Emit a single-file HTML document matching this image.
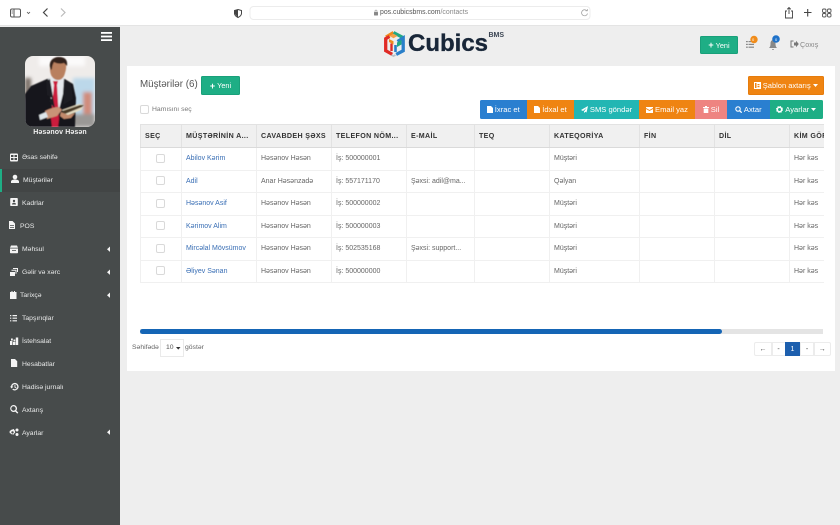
<!DOCTYPE html>
<html lang="az"><head><meta charset="utf-8"><title>Cubics BMS</title>
<style>
*{box-sizing:border-box}
html,body{margin:0;padding:0;width:840px;height:525px;overflow:hidden;background:#eee}
body{font-family:"Liberation Sans",Arial,sans-serif;font-size:7.2px;color:#555;position:relative}
.a{position:absolute}
#root{position:absolute;inset:0;filter:blur(.35px)}
.t{position:absolute;white-space:nowrap;line-height:10px}
.side{color:#e9eaea;font-size:6.8px;margin-top:1px}
.btn{position:absolute;color:#fff;display:flex;align-items:center;justify-content:center;gap:2px;font-size:7.6px;white-space:nowrap}
.btn svg{flex:none}
table{position:absolute;left:140px;top:124px;width:683px;border-collapse:collapse;table-layout:fixed}
th{height:23px;background:#f0f0f0;border:1px solid #e2e2e2;border-bottom:1.5px solid #dadada;text-align:left;padding:0 0 0 4px;font-size:7.1px;color:#333;font-weight:bold;letter-spacing:.35px;white-space:nowrap;overflow:hidden}
td{height:22.5px;border:1px solid #f0f0f0;padding:0 0 0 4px;font-size:7px;color:#666;white-space:nowrap;overflow:hidden}
td:last-child,th:last-child{border-right:0}
td a{color:#3a6fb5;text-decoration:none}
.cb{display:block;width:9px;height:9px;border:1px solid #d9d9d9;border-radius:2px;background:#fff;margin:-1px 0 0 11px}
.pg{position:absolute;top:342px;height:14px;border:1px solid #ececec;background:#fff;display:flex;align-items:center;justify-content:center;font-size:7px;color:#444}
</style></head><body><div id="root">

<!-- browser bar -->
<div class="a" style="left:0;top:0;width:840px;height:26px;background:#fff;border-bottom:1px solid #e4e4e4"></div>
<svg class="a" style="left:0;top:0" width="840" height="26" fill="none" stroke="#555" stroke-width="1">
<rect x="10.5" y="9" width="10" height="8" rx="1.5"/><path d="M14 9v8"/><path d="M11.5 11h1.5M11.5 13h1.5" stroke-width=".7"/>
<path d="M27 12l1.5 1.5L30 12" stroke-width=".8"/>
<path d="M47.5 8.5L43.5 12.5l4 4" stroke-width="1.2" stroke="#444"/>
<path d="M61 8.5l4 4-4 4" stroke="#bbb" stroke-width="1.2"/>
<path d="M238 9.5l3.5 1v3c0 2-1.600 3-3.500 4-1.900-1-3.500-2-3.500-4v-3z" stroke="#444"/><path d="M238 9.500v8l-3.500-4v-3z" fill="#444" stroke="none"/>
<rect x="250" y="6.500" width="340" height="13" rx="3.500" fill="#fff" stroke="#ececec"/>
<rect x="374" y="12" width="4" height="3.500" rx=".5" fill="#888" stroke="none"/><path d="M375 12v-1a1 1 0 0 1 2 0v1" stroke="#888" stroke-width=".6"/>
<path d="M587 11a3 3 0 1 0 .5 2.500" stroke="#999" stroke-width=".7"/><path d="M585.500 10.800h2v-1.800" stroke="#999" stroke-width=".6"/>
<path d="M787 11h-1.500v7h7v-7H791M789 14V7.500M787.200 9.300L789 7.500l1.800 1.800" stroke="#444" stroke-width=".9"/>
<path d="M804 12.500h7.500M807.700 9v7.500" stroke="#444" stroke-width="1.100"/>
<g stroke="#555" stroke-width=".9"><rect x="822.500" y="9" width="3.500" height="3.500" rx="1.200"/><rect x="827.500" y="9" width="3.500" height="3.500" rx="1.200"/><rect x="822.500" y="13.500" width="3.500" height="3.500" rx="1.200"/><rect x="827.500" y="13.500" width="3.500" height="3.500" rx="1.200"/></g>
</svg>
<div class="t" style="left:380px;top:8px;font-size:6.900px;color:#555">pos.cubicsbms.com<span style="color:#888">/contacts</span></div>

<!-- logo -->
<svg class="a" style="left:382px;top:28px" width="26" height="32" viewBox="382 28 26 32" fill="none" stroke-width="3.300">
<path d="M386 37l7.500-4.400" stroke="#f08a1d"/>
<path d="M393.500 32.600l9.500 5" stroke="#23a884"/>
<path d="M389.500 36.500l-3.800 2.200v12l6.500 3.600" stroke="#e02b26"/>
<path d="M391.500 43.500v7.500" stroke="#e02b26" stroke-width="2.400"/>
<path d="M397.500 41.500l5.700-3.500v12.700l-7 3.700" stroke="#2a7fc9"/>
<path d="M395.500 45v7" stroke="#2a7fc9" stroke-width="2.600"/>
<path d="M389 39l4.500 2.200v3.300l-4.500-2.500z" fill="#f08a1d" stroke="none"/>
<path d="M397 42.500l4.500-2.800v4.800l-4.500 2.500z" fill="#23a884" stroke="none"/>
<path d="M389.500 36l4-2.300 4 2.300-4 2.300z" fill="#f5a14a" stroke="none"/>
<path d="M391.500 55l2 1 2-1" stroke="#b8c0c8" stroke-width="1.800"/>
</svg>
<div class="t" style="left:408px;top:29px;font-size:24px;line-height:30px;font-weight:bold;color:#182638;-webkit-text-stroke:.35px #182638">Cubics</div>
<div class="t" style="left:488.500px;top:30.500px;font-size:7px;line-height:10px;font-weight:bold;color:#3a4452">BMS</div>

<!-- top right controls -->
<div class="btn" style="left:700px;top:36px;width:38px;height:18px;background:#1eae85;border:1px solid #19a07a;border-radius:1.500px;font-size:7.300px"><b style="font-size:9px;line-height:8px">+</b>Yeni</div>
<svg class="a" style="left:744px;top:34px" width="40" height="20" fill="#888">
<rect x="2" y="7" width="1.800" height="1.200"/><rect x="4.500" y="7" width="5.500" height="1.200"/><rect x="2" y="9.800" width="1.800" height="1.200"/><rect x="4.500" y="9.800" width="5.500" height="1.200"/><rect x="2" y="12.600" width="1.800" height="1.200"/><rect x="4.500" y="12.600" width="5.500" height="1.200"/>
<circle cx="10" cy="5.500" r="3.700" fill="#f08c1a"/>
<path d="M25 14h8c-1-1-1.500-2-1.500-4.500 0-2-1-3.500-2.500-3.500s-2.500 1.500-2.500 3.500c0 2.500-.5 3.500-1.500 4.500zM28 15h2a1 1 0 0 1-2 0z"/>
<circle cx="32" cy="5" r="3.800" fill="#1f72c9"/>
</svg>
<div class="t" style="left:752px;top:35px;font-size:4px;color:#fff">0</div>
<div class="t" style="left:775px;top:34.500px;font-size:4px;color:#fff">0</div>
<svg class="a" style="left:790px;top:40px" width="9" height="8"><path d="M3.500 1H1v6h2.500" fill="none" stroke="#777" stroke-width="1"/><path d="M4 2.500h2V.8L8.800 4 6 7.200V5.500H4z" fill="#777"/></svg>
<div class="t" style="left:800px;top:40px;font-size:7.200px;color:#888">Çoxış</div>

<!-- sidebar -->
<div class="a" style="left:0;top:27px;width:120px;height:498px;background:#474b4b"></div>
<div class="a" style="left:2px;top:169px;width:118px;height:23px;background:#424545"></div>
<div class="a" style="left:0;top:169px;width:2px;height:23px;background:#1eae85"></div>
<svg class="a" style="left:101px;top:31px" width="12" height="12" fill="#fff"><rect y="1" width="11" height="1.800"/><rect y="4.600" width="11" height="1.800"/><rect y="8.200" width="11" height="1.800"/></svg>

<!-- avatar -->
<svg class="a" style="left:25px;top:56px" width="70" height="71" viewBox="0 0 70 71">
<defs><clipPath id="av"><rect width="70" height="71" rx="8"/></clipPath><filter id="bl"><feGaussianBlur stdDeviation="1.800"/></filter><filter id="bs"><feGaussianBlur stdDeviation=".5"/></filter></defs>
<g clip-path="url(#av)">
<rect width="70" height="71" fill="#efecea"/>
<g filter="url(#bl)">
<rect x="48" y="22" width="22" height="36" fill="#bcd8ea"/>
<rect x="58" y="36" width="9" height="24" fill="#d08c7c"/>
<rect x="0" y="22" width="6" height="20" fill="#7a6f68"/>
<rect x="46" y="58" width="24" height="13" fill="#9a9896"/>
<rect x="14" y="0" width="46" height="10" fill="#fbfafa"/>
</g>
<g filter="url(#bs)">
<path d="M0 71V38L6 30l16-7 8-2 8 1 10 6 3 14-1 29z" fill="#15161b"/>
<path d="M23 23l7-3 9 2-1 16-6 24-5-12z" fill="#e6eaee"/>
<path d="M28 25h5l-1 4 2 34-1 8h-6l-1-8 3-34z" fill="#cb1a3c"/>
<path d="M21 25l4-2 5 30-6-8 3-3-5-3zM39 23l7 4 2 16-10 6 1-6z" fill="#1b1c21"/>
<path d="M26 6c3-3 11-3 14 0 2 3 1 8 0 11-1 4-3 7-7 7-5 0-8-5-8-11 0-3 0-5 1-7z" fill="#b9805f"/>
<path d="M25 11c-1-6 3-10 9-10 6 0 9 3 8 9l-3-3c-3 1-7 1-10-1-1 2-2 4-2 7l-1 1z" fill="#33211a"/>
<path d="M20 55c4-2 9-4 14-4l3 3-5 6-10 3z" fill="#c99377"/>
<path d="M14 59l7-3 2 5-8 3z" fill="#dfe6ea"/>
<path d="M37 54l17-6 5 1-3 5-15 6z" fill="#e6ddc2"/>
<path d="M37 55l18-6 4 0-2 2-17 7z" fill="#4a3a28"/>
<path d="M36 56l7 3 7-2-4 5-7 1-4-3z" fill="#c28a6c"/>
</g>
</g></svg>
<div class="t" style="left:0;top:128px;width:120px;text-align:center;color:#fff;font-size:7px;font-weight:bold;letter-spacing:.1px;opacity:.92">Həsənov Həsən</div>

<div class="t side" style="left:22px;top:152px">Əsas səhifə</div>
<div class="t side" style="left:23px;top:174.500px">Müştərilər</div>
<div class="t side" style="left:22px;top:197.500px">Kadrlar</div>
<div class="t side" style="left:20px;top:220.500px">POS</div>
<div class="t side" style="left:22px;top:243.500px">Məhsul</div>
<div class="t side" style="left:22px;top:267px">Gəlir və xərc</div>
<div class="t side" style="left:20px;top:290px">Tarixçə</div>
<div class="t side" style="left:22px;top:313px">Tapşırıqlar</div>
<div class="t side" style="left:22px;top:335.500px">İstehsalat</div>
<div class="t side" style="left:22px;top:358.500px">Hesabatlar</div>
<div class="t side" style="left:22px;top:382px">Hadisə jurnalı</div>
<div class="t side" style="left:22px;top:404.500px">Axtarış</div>
<div class="t side" style="left:22px;top:427.500px">Ayarlar</div>

<svg class="a" style="left:0;top:140px" width="120" height="305" viewBox="0 140 120 305" fill="#f4f4f4">
<path fill-rule="evenodd" d="M11 153.500h6a1 1 0 0 1 1 1v6a1 1 0 0 1-1 1h-6a1 1 0 0 1-1-1v-6a1 1 0 0 1 1-1zM11 155v2h2.500v-2zM14.500 155v2H17v-2zM11 158v2h2.500v-2zM14.500 158v2H17v-2z"/>
<circle cx="15" cy="177" r="2.300"/><path d="M11 183v-1.500c0-1.300 2-2 4-2s4 .7 4 2V183z"/>
<path fill-rule="evenodd" d="M11 198h6a.8.8 0 0 1 .8.8v6.400a.8.8 0 0 1-.8.8h-6a.8.8 0 0 1-.8-.8v-6.400a.8.8 0 0 1 .8-.8zM14 199.800a1.200 1.200 0 1 0 0 2.400 1.200 1.200 0 0 0 0-2.400zM12 204.500h4c0-1.200-1-1.700-2-1.700s-2 .5-2 1.700z"/>
<path fill-rule="evenodd" d="M9 221h3.500l2.500 2.500v5.500H9zM10 225v.8h4V225zM10 227v.8h4V227z"/>
<path d="M11 245.500h6l1 2.200H10zM10 248.500h8v4a.7.700 0 0 1-.7.7h-6.600a.7.700 0 0 1-.7-.7zM12 250v.8h4V250z" fill-rule="evenodd"/>
<path d="M13 268h5v4h-1v-3h-4zM11.500 269.700h5v4h-1v-2.900h-4zM10 272h5v4h-5z"/>
<path d="M10 292h6.500v7H10zM11.500 291h1v1.500h-1zM14 291h1v1.500h-1z"/>
<path d="M10 315h1.300v1.200H10zM12.500 315H17v1.200h-4.500zM10 317.600h1.300v1.200H10zM12.500 317.600H17v1.200h-4.500zM10 320.200h1.300v1.200H10zM12.500 320.200H17v1.200h-4.500z"/>
<path d="M10 341h2.400v4H10zM13 342h2.400v3H13zM15.800 337.500h2.400v7.500h-2.400zM11 338.500h1.800v2H11zM13.500 339.500h1.800v2h-1.800z"/>
<path d="M11 359h4l2.200 2.200V367H11z"/>
<path d="M11 386.500a3.800 3.800 0 1 1 1.300 3l.8-.9a2.500 2.500 0 1 0-.8-2.100h1l-1.600 2-1.700-2zM14.500 385h.9v2l1.300.8-.4.700-1.800-1z"/>
<path fill-rule="evenodd" d="M13.500 405a3.500 3.500 0 0 1 2.800 5.600l2 2-1 1-2-2A3.500 3.500 0 1 1 13.500 405zM13.500 406.300a2.200 2.200 0 1 0 0 4.400 2.200 2.200 0 0 0 0-4.400z"/>
<path fill-rule="evenodd" d="M13 429l1 .3.300 1 .9.500-.3 1 .3 1-.9.500-.3 1-1 .3-.8-.5-1 .1-.6-.8-1-.4.100-1-.1-1 1-.5.600-.8 1 .1zM12.500 431.200a1.200 1.200 0 1 0 0 2.400 1.200 1.200 0 0 0 0-2.400z"/>
<circle cx="17" cy="430" r="1.500"/><circle cx="17" cy="434.500" r="1.500"/>
<path d="M110 246.500l-3 2.700 3 2.700zM110 269.500l-3 2.700 3 2.700zM110 292.500l-3 2.700 3 2.700zM110 429.500l-3 2.700 3 2.700z"/>
</svg>

<!-- card -->
<div class="a" style="left:127px;top:66px;width:708px;height:305px;background:#fff"></div>
<div class="t" style="left:140px;top:80px;font-size:9.800px;color:#555">Müştərilər (6)</div>
<div class="btn" style="left:201px;top:76px;width:39px;height:19px;background:#1eae85;border:1px solid #19a07a;border-radius:1.500px;font-size:7.300px"><b style="font-size:9px;line-height:8px">+</b>Yeni</div>
<div class="btn" style="left:748px;top:76px;width:75.500px;height:19px;background:#ef8412;border:1px solid #e67c0c;border-radius:1.500px;font-size:7.500px"><svg width="7" height="7"><path fill="#fff" fill-rule="evenodd" d="M0 0h7v7H0zM1 1v5h1.500V1zM3.500 2v1.200h2V2zM3.500 4v1.200h2V4z"/></svg>Şablon axtarış <svg width="5" height="3"><path d="M0 0h5L2.500 3z" fill="#fff"/></svg></div>
<span class="a" style="left:140px;top:104.500px;width:9px;height:9px;border:1px solid #d9d9d9;border-radius:2px;background:#fff"></span>
<div class="t" style="left:152px;top:105px;font-size:6.800px;color:#777">Hamısını seç</div>

<!-- action buttons -->
<div class="btn" style="left:479.500px;top:100px;width:47.500px;height:19px;background:#2a7fd0;border-radius:1.500px 0 0 1.500px"><svg width="6" height="7"><path fill="#fff" d="M0 0h4l2 2v5H0z"/></svg>İxrac et</div>
<div class="btn" style="left:527px;top:100px;width:47px;height:19px;background:#ef8412"><svg width="6" height="7"><path fill="#fff" d="M0 0h4l2 2v5H0z"/></svg>İdxal et</div>
<div class="btn" style="left:574px;top:100px;width:65px;height:19px;background:#22b6b3"><svg width="7" height="7"><path fill="#fff" d="M7 0L0 4l2 1 3.500-3L3 5.500V7l1.300-1.300L5.500 6.500z"/></svg>SMS göndər</div>
<div class="btn" style="left:639px;top:100px;width:56px;height:19px;background:#ef8412"><svg width="7" height="6"><path fill="#fff" d="M0 0h7v1L3.500 3 0 1zM0 2l3.500 2L7 2v4H0z"/></svg>Email yaz</div>
<div class="btn" style="left:695px;top:100px;width:32px;height:19px;background:#ee8481"><svg width="6" height="7"><path fill="#fff" d="M0 1h6v1H0zM2 0h2v1H2zM.7 2.500h4.600V7H.7z"/></svg>Sil</div>
<div class="btn" style="left:727px;top:100px;width:42.500px;height:19px;background:#2a7fd0"><svg width="7" height="7"><circle cx="3" cy="3" r="2.200" fill="none" stroke="#fff" stroke-width="1.100"/><path d="M4.500 4.500L6.700 6.700" stroke="#fff" stroke-width="1.300"/></svg>Axtar</div>
<div class="btn" style="left:769.500px;top:100px;width:53.500px;height:19px;background:#1eae85;border-radius:0 1.500px 1.500px 0"><svg width="7" height="7"><circle cx="3.500" cy="3.500" r="2.200" fill="none" stroke="#fff" stroke-width="1.500"/><circle cx="3.500" cy="3.500" r="3" fill="none" stroke="#fff" stroke-width="1" stroke-dasharray="1.200 1.150"/></svg>Ayarlar <svg width="5" height="3"><path d="M0 0h5L2.500 3z" fill="#fff"/></svg></div>

<!-- table -->
<table>
<colgroup><col style="width:41px"><col style="width:75px"><col style="width:75px"><col style="width:75px"><col style="width:68px"><col style="width:75px"><col style="width:90px"><col style="width:75px"><col style="width:75px"><col style="width:34px"></colgroup>
<tr><th>SEÇ</th><th>MÜŞTƏRİNİN A...</th><th>CAVABDEH ŞƏXS</th><th>TELEFON NÖM...</th><th>E-MAİL</th><th>TEQ</th><th>KATEQORİYA</th><th>FİN</th><th>DİL</th><th>KİM GÖRƏ</th></tr>
<tr><td><span class="cb"></span></td><td><a>Abilov Kərim</a></td><td>Həsənov Həsən</td><td>İş: 500000001</td><td></td><td></td><td>Müştəri</td><td></td><td></td><td>Hər kəs</td></tr>
<tr><td><span class="cb"></span></td><td><a>Adil</a></td><td>Anar Həsənzadə</td><td>İş: 557171170</td><td>Şəxsi: adil@ma...</td><td></td><td>Qəlyan</td><td></td><td></td><td>Hər kəs</td></tr>
<tr><td><span class="cb"></span></td><td><a>Həsənov Asif</a></td><td>Həsənov Həsən</td><td>İş: 500000002</td><td></td><td></td><td>Müştəri</td><td></td><td></td><td>Hər kəs</td></tr>
<tr><td><span class="cb"></span></td><td><a>Kərimov Alim</a></td><td>Həsənov Həsən</td><td>İş: 500000003</td><td></td><td></td><td>Müştəri</td><td></td><td></td><td>Hər kəs</td></tr>
<tr><td><span class="cb"></span></td><td><a>Mircəlal Mövsümov</a></td><td>Həsənov Həsən</td><td>İş: 502535168</td><td>Şəxsi: support...</td><td></td><td>Müştəri</td><td></td><td></td><td>Hər kəs</td></tr>
<tr><td><span class="cb"></span></td><td><a>Əliyev Sənan</a></td><td>Həsənov Həsən</td><td>İş: 500000000</td><td></td><td></td><td>Müştəri</td><td></td><td></td><td>Hər kəs</td></tr>
</table>

<!-- scrollbar -->
<div class="a" style="left:140px;top:329px;width:683px;height:4.500px;background:#e4e4e4"></div>
<div class="a" style="left:140px;top:329px;width:582px;height:4.500px;background:#1565b5;border-radius:2.500px"></div>

<!-- footer -->
<div class="t" style="left:132px;top:343px;font-size:6.800px;color:#666">Səhifədə</div>
<div class="a" style="left:160px;top:339px;width:23.500px;height:18px;border:1px solid #eaeaea;background:#fff"></div>
<div class="t" style="left:166px;top:343px;font-size:6.800px;color:#555">10</div>
<svg class="a" style="left:176px;top:346.500px" width="5" height="3"><path d="M0 0h4.500L2.250 2.600z" fill="#333"/></svg>
<div class="t" style="left:185px;top:343px;font-size:6.800px;color:#666">göstər</div>

<div class="pg" style="left:754px;width:18px;border-radius:2px 0 0 2px">←</div>
<div class="pg" style="left:771.500px;width:14px">-</div>
<div class="pg" style="left:785px;width:15px;background:#1d5fae;border-color:#1d5fae;color:#fff">1</div>
<div class="pg" style="left:800px;width:14px">-</div>
<div class="pg" style="left:813.500px;width:17.500px;border-radius:0 2px 2px 0">→</div>

</div></body></html>
